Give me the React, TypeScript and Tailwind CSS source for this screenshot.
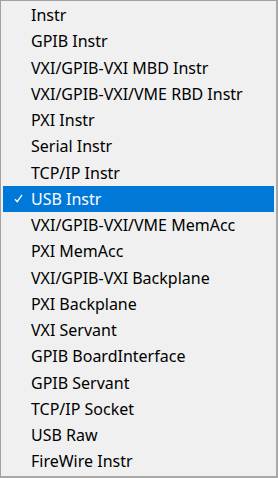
const items = [
  'Instr',
  'GPIB Instr',
  'VXI/GPIB-VXI MBD Instr',
  'VXI/GPIB-VXI/VME RBD Instr',
  'PXI Instr',
  'Serial Instr',
  'TCP/IP Instr',
  'USB Instr',
  'VXI/GPIB-VXI/VME MemAcc',
  'PXI MemAcc',
  'VXI/GPIB-VXI Backplane',
  'PXI Backplane',
  'VXI Servant',
  'GPIB BoardInterface',
  'GPIB Servant',
  'TCP/IP Socket',
  'USB Raw',
  'FireWire Instr',
]

const selected = 'USB Instr'

export default function App() {
  return (
    <div className="h-[478px] w-[278px] bg-[#f0f0f0] p-0">
      <div className="h-full w-full border-t border-l border-r-2 border-b-2 border-t-[#a0a0a0] border-l-[#a0a0a0] border-r-[#a8a8a8] border-b-[#a8a8a8] pt-[1px] pl-[2px] pr-[2px] font-['Noto_Sans',sans-serif] text-[16px] leading-none text-black">
        {items.map((item) => {
          const on = item === selected
          return (
            <div
              key={item}
              className={`flex h-[26.25px] items-center ${on ? 'bg-[#0078d7] text-white' : ''}`}
            >
              <span className="flex w-[28px] shrink-0 justify-center pl-[3px]">
                {on && (
                  <svg width="9" height="9" viewBox="0 0 9 9" fill="none">
                    <path d="M1 5.2 L3.2 7.6 L8 1" stroke="white" strokeWidth="1.3" />
                  </svg>
                )}
              </span>
              <span>{item}</span>
            </div>
          )
        })}
      </div>
    </div>
  )
}
